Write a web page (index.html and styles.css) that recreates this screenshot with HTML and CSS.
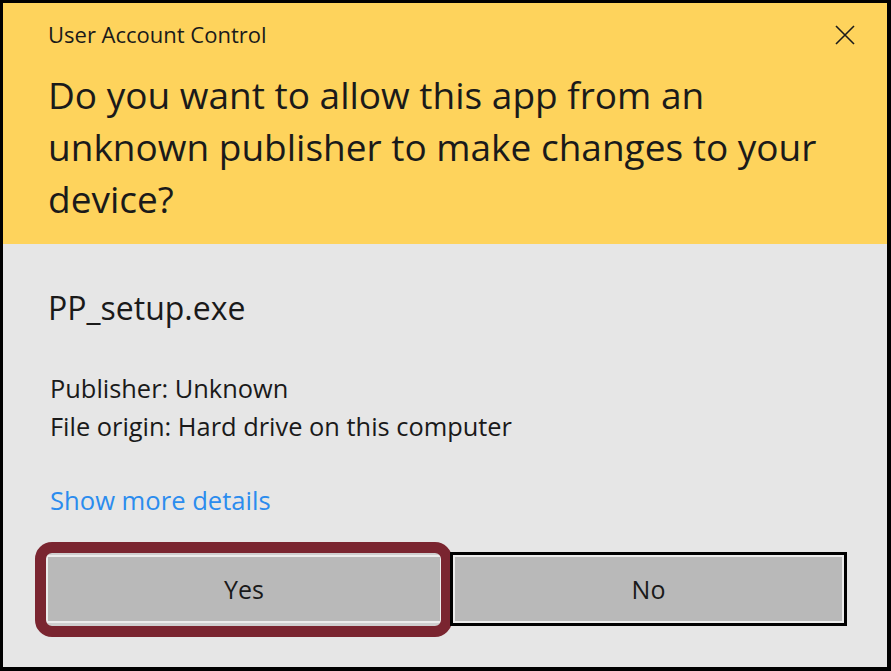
FILE: index.html
```html
<!DOCTYPE html>
<html lang="en">
<head>
<meta charset="utf-8">
<title>User Account Control</title>
<link rel="stylesheet" href="styles.css">
</head>
<body>
<div class="dialog">
  <header class="header">
    <div class="titlebar">
      <span class="title">User Account Control</span>
      <span class="close" aria-label="Close">
        <svg width="20" height="20" viewBox="0 0 20 20"><path d="M1 1 L19 19 M19 1 L1 19" stroke="#1b1b1b" stroke-width="1.6" fill="none"/></svg>
      </span>
    </div>
    <h1 class="question">Do you want to allow this app from an unknown publisher to make changes to your device?</h1>
  </header>
  <main class="body">
    <div class="app-name">PP_setup.exe</div>
    <div class="details">
      <div>Publisher: Unknown</div>
      <div>File origin: Hard drive on this computer</div>
    </div>
    <a class="more" href="#">Show more details</a>
    <div class="buttons">
      <div class="btn-wrap">
        <button class="btn">Yes</button>
        <span class="highlight"></span>
      </div>
      <div class="btn-wrap">
        <button class="btn btn-default">No</button>
      </div>
    </div>
  </main>
</div>
</body>
</html>
```

FILE: styles.css
```css
* { box-sizing: border-box; }
html, body {
  margin: 0;
  padding: 0;
  width: 891px;
  height: 671px;
  overflow: hidden;
}
body {
  font-family: "Open Sans", "Noto Sans", sans-serif;
  color: #1a1a1a;
  background: #000;
}
.dialog {
  width: 891px;
  height: 671px;
  border: 3px solid #000;
  border-bottom-width: 4px;
  border-right-width: 4px;
  background: #e6e6e6;
  display: flex;
  flex-direction: column;
}
.header {
  background: #fed35c;
  padding: 18px 0 16px 45px;
  height: 241px;
}
.titlebar {
  display: flex;
  align-items: center;
  justify-content: space-between;
  height: 26px;
  padding-right: 32px;
}
.title {
  font-size: 22px;
  line-height: 26px;
}
.close {
  display: flex;
  width: 20px;
  height: 20px;
  margin-top: 2px;
}
.question {
  margin: 22px 0 0 0;
  font-size: 37px;
  font-weight: 400;
  line-height: 52px;
  width: 790px;
}
.body {
  padding: 44px 41px 0 45px;
}
.app-name {
  font-size: 32px;
  line-height: 40px;
}
.details {
  margin-top: 41px;
  padding-left: 2px;
  font-size: 25.4px;
  line-height: 38px;
}
.more {
  display: block;
  margin-top: 37px;
  padding-left: 2px;
  font-size: 25.6px;
  line-height: 38px;
  color: #2b8cee;
  text-decoration: none;
}
.buttons {
  margin-top: 32px;
  margin-left: -5px;
  display: grid;
  grid-template-columns: 402px 397px;
  gap: 5px;
}
.btn-wrap {
  position: relative;
}
.btn {
  display: block;
  width: 100%;
  height: 74px;
  border: 3px solid #cfcfcf;
  background: #b9b9b9;
  box-shadow: inset 0 0 0 2px #ececec;
  font-family: inherit;
  font-size: 25px;
  color: #1a1a1a;
  padding: 0;
}
.btn-default {
  border-color: #000;
}
.highlight {
  position: absolute;
  top: -10px;
  left: -8px;
  right: -7px;
  bottom: -11px;
  border: 11px solid #7a2530;
  border-radius: 17px;
  pointer-events: none;
}
```
